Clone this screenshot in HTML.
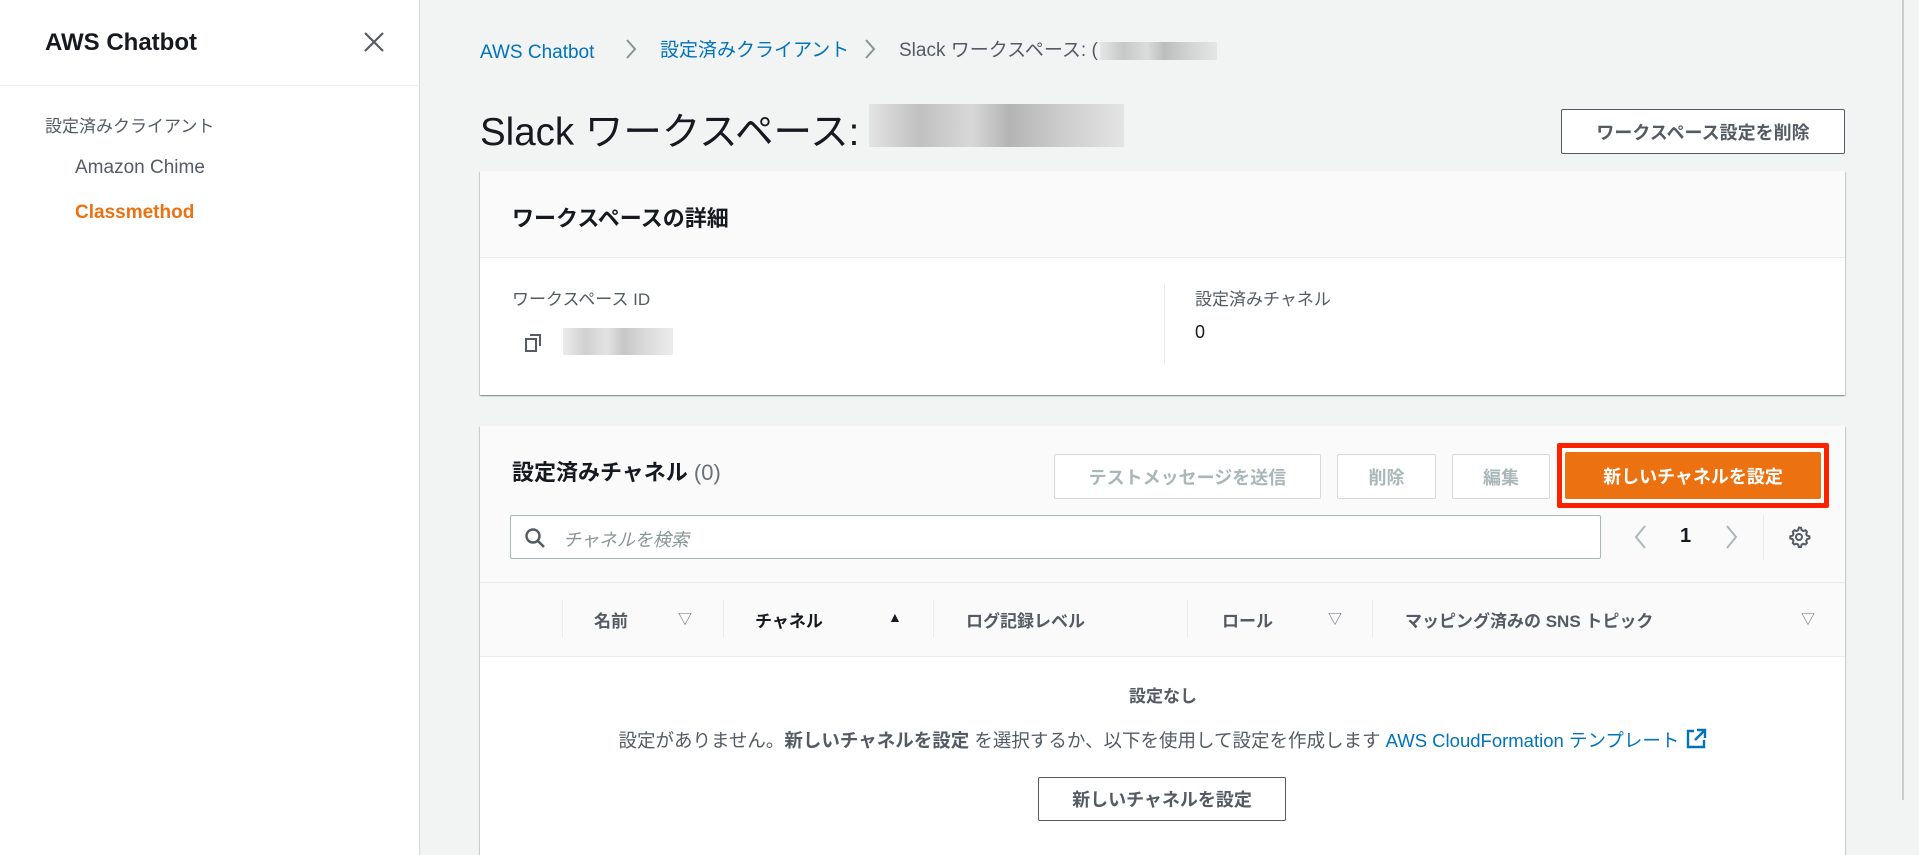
<!DOCTYPE html>
<html><head><meta charset="utf-8"><style>
*{box-sizing:border-box;margin:0;padding:0}
html,body{width:1919px;height:855px;overflow:hidden}
body{background:#f2f3f3;font-family:"Liberation Sans","Noto Sans CJK JP",sans-serif;color:#16191f;position:relative}
.a{position:absolute;white-space:nowrap}
.side{position:absolute;left:0;top:0;width:420px;height:855px;background:#fff;border-right:1px solid #d5dbdb}
.panel{position:absolute;background:#fff;box-shadow:0 1px 1px rgba(0,28,36,.3),1px 1px 1px rgba(0,28,36,.15),-1px 1px 1px rgba(0,28,36,.15)}
.btn{position:absolute;border:1px solid #d5dbdb;background:#fff;color:#aab7b8;font-weight:bold;font-size:18px;display:flex;align-items:center;justify-content:center;border-radius:2px}
.blur{position:absolute;background:linear-gradient(90deg,#ddd,#aaa 20%,#ccc 40%,#999 55%,#bbb 75%,#ddd)}
.th{position:absolute;top:607px;font-size:17px;font-weight:bold;color:#545b64}
.tri{position:absolute;top:609px;font-size:14px;color:#687078}
.vd{position:absolute;top:600px;width:1px;height:38px;background:#eaeded}
.bc{position:absolute;top:38px;height:26px;line-height:26px;font-size:19px;white-space:nowrap}
</style></head><body>
<div class="side">
<div class="a" style="left:45px;top:29px;font-size:24px;font-weight:bold">AWS Chatbot</div>
<svg class="a" style="left:363px;top:31px" width="22" height="22"><path d="M2 2L20 20M20 2L2 20" stroke="#545b64" stroke-width="2.2"/></svg>
<div class="a" style="left:0;top:85px;width:420px;height:1px;background:#eaeded"></div>
<div class="a" style="left:45px;top:112px;font-size:17px;color:#545b64">設定済みクライアント</div>
<div class="a" style="left:75px;top:157px;font-size:19px;color:#545b64">Amazon Chime</div>
<div class="a" style="left:75px;top:202px;font-size:19px;font-weight:bold;color:#ec7211">Classmethod</div>
</div>
<div class="a" style="left:1902px;top:0;width:2px;height:800px;background:#ccc"></div>
<div class="bc" style="left:480px;color:#0073bb;top:40px">AWS Chatbot</div>
<svg class="a" style="left:624px;top:38px" width="14" height="22"><path d="M3 2l8 9-8 9" stroke="#879596" stroke-width="2" fill="none"/></svg>
<div class="bc" style="left:660px;color:#0073bb">設定済みクライアント</div>
<svg class="a" style="left:863px;top:38px" width="14" height="22"><path d="M3 2l8 9-8 9" stroke="#879596" stroke-width="2" fill="none"/></svg>
<div class="bc" style="left:899px;color:#545b64">Slack ワークスペース: (</div>
<div class="blur" style="left:1100px;top:42px;width:117px;height:18px;opacity:.6"></div>
<div class="a" style="left:480px;top:101px;font-size:38.5px">Slack ワークスペース:</div>
<div class="blur" style="left:869px;top:104px;width:255px;height:43px;opacity:.7"></div>
<div class="btn" style="left:1561px;top:109px;width:284px;height:45px;border-color:#545b64;color:#545b64">ワークスペース設定を削除</div>
<div class="panel" style="left:480px;top:171px;width:1365px;height:224px">
<div class="a" style="left:0;top:0;width:1365px;height:87px;background:#fafafa;border-bottom:1px solid #eaeded"></div>
<div class="a" style="left:32px;top:30px;font-size:22px;font-weight:bold">ワークスペースの詳細</div>
<div class="a" style="left:32px;top:114px;font-size:17px;color:#545b64">ワークスペース ID</div>
<svg class="a" style="left:44px;top:162px" width="20" height="20"><path d="M6 2h10v11M2 6h10v12H2z" stroke="#545b64" stroke-width="2" fill="none"/></svg>
<div class="blur" style="left:83px;top:157px;width:110px;height:27px;opacity:.55"></div>
<div class="a" style="left:684px;top:113px;width:1px;height:80px;background:#eaeded"></div>
<div class="a" style="left:715px;top:114px;font-size:17px;color:#545b64">設定済みチャネル</div>
<div class="a" style="left:715px;top:151px;font-size:18px">0</div>
</div>
<div class="panel" style="left:480px;top:426px;width:1365px;height:429px;background:#fafafa">
<div class="a" style="left:0;top:230px;width:1365px;height:199px;background:#fff;border-top:1px solid #eaeded"></div>
</div>
<div class="a" style="left:480px;top:582px;width:1365px;height:1px;background:#eaeded"></div>
<div class="a" style="left:512px;top:455px;font-size:22px;font-weight:bold">設定済みチャネル <span style="font-weight:normal;color:#687078">(0)</span></div>
<div class="btn" style="left:1054px;top:454px;width:267px;height:45px">テストメッセージを送信</div>
<div class="btn" style="left:1337px;top:454px;width:99px;height:45px">削除</div>
<div class="btn" style="left:1452px;top:454px;width:98px;height:45px">編集</div>
<div class="a" style="left:1557px;top:443px;width:272px;height:65px;border:5px solid #ff2200;border-radius:2px;background:#fff"></div>
<div class="btn" style="left:1565px;top:452px;width:256px;height:47px;background:#ec7211;border-color:#ec7211;color:#fff">新しいチャネルを設定</div>
<div class="a" style="left:510px;top:515px;width:1091px;height:44px;border:1px solid #aab7b8;background:#fff;border-radius:2px"></div>
<svg class="a" style="left:524px;top:527px" width="22" height="22"><circle cx="9" cy="9" r="6.5" stroke="#545b64" stroke-width="2.4" fill="none"/><path d="M14 14l6 6" stroke="#545b64" stroke-width="2.6"/></svg>
<div class="a" style="left:563px;top:526px;font-size:18px;font-style:italic;color:#879596">チャネルを検索</div>
<svg class="a" style="left:1633px;top:524px" width="16" height="26"><path d="M12 2L3 13l9 11" stroke="#aab7b8" stroke-width="2" fill="none"/></svg>
<div class="a" style="left:1680px;top:525px;font-size:20px;font-weight:bold">1</div>
<svg class="a" style="left:1723px;top:524px" width="16" height="26"><path d="M4 2l9 11-9 11" stroke="#aab7b8" stroke-width="2" fill="none"/></svg>
<div class="a" style="left:1763px;top:515px;width:1px;height:45px;background:#eaeded"></div>
<svg class="a" style="left:1787px;top:525px" width="24" height="24" viewBox="0 0 24 24"><path d="M12 2.5l2 .3.6 2.3 1.6.9 2.3-.7 1.4 1.5-.7 2.3.9 1.6 2.3.6v2.2l-2.3.6-.9 1.6.7 2.3-1.4 1.5-2.3-.7-1.6.9-.6 2.3h-2.2l-.6-2.3-1.6-.9-2.3.7-1.5-1.5.7-2.3-.9-1.6-2.3-.6v-2.2l2.3-.6.9-1.6-.7-2.3 1.5-1.5 2.3.7 1.6-.9.6-2.3z" stroke="#545b64" stroke-width="2" fill="none"/><circle cx="12" cy="12" r="3" stroke="#545b64" stroke-width="2" fill="none"/></svg>
<div class="vd" style="left:562px"></div><div class="vd" style="left:723px"></div><div class="vd" style="left:933px"></div><div class="vd" style="left:1187px"></div><div class="vd" style="left:1372px"></div>
<div class="th" style="left:594px">名前</div><div class="tri" style="left:678px">▽</div>
<div class="th" style="left:755px;color:#16191f">チャネル</div><div class="tri" style="left:888px;color:#16191f">▲</div>
<div class="th" style="left:966px">ログ記録レベル</div>
<div class="th" style="left:1222px">ロール</div><div class="tri" style="left:1328px">▽</div>
<div class="th" style="left:1405px">マッピング済みの SNS トピック</div><div class="tri" style="left:1801px">▽</div>
<div class="a" style="left:1063px;top:682px;width:200px;text-align:center;font-size:17px;font-weight:bold;color:#545b64">設定なし</div>
<div class="a" style="left:480px;top:727px;width:1365px;text-align:center;font-size:18.5px;color:#545b64">設定がありません。<b>新しいチャネルを設定</b> を選択するか、以下を使用して設定を作成します <span style="color:#0073bb">AWS CloudFormation テンプレート</span> <svg width="22" height="22" style="vertical-align:-3px"><path d="M9 3H3v16h16v-7M12 2h8v8M20 2l-10 10" stroke="#0073bb" stroke-width="2.4" fill="none"/></svg></div>
<div class="btn" style="left:1038px;top:777px;width:248px;height:44px;border-color:#545b64;color:#545b64">新しいチャネルを設定</div>
</body></html>
